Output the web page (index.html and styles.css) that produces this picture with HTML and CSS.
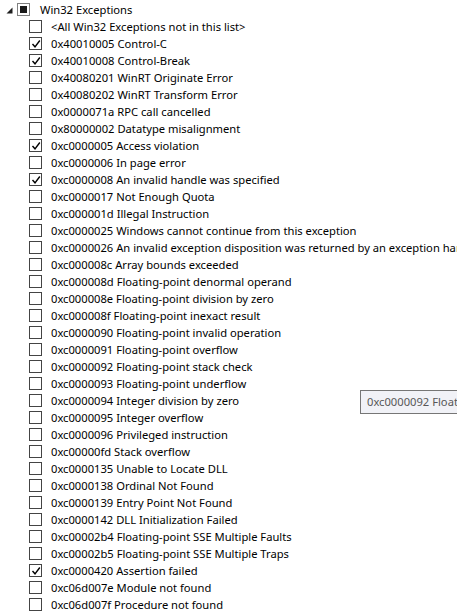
FILE: index.html
```html
<!DOCTYPE html>
<html>
<head>
<meta charset="utf-8">
<link rel="stylesheet" href="styles.css">
</head>
<body>
<div class="tree">
  <div class="row header">
    <svg class="expander" width="7" height="7" viewBox="0 0 7 7"><polygon points="6.5,0.5 6.5,6.5 0.5,6.5" fill="#1e1e1e"/></svg>
    <span class="box partial"><span class="fill"></span></span>
    <span class="label">Win32 Exceptions</span>
  </div>
  <div class="row item"><span class="box"></span><span class="label">&lt;All Win32 Exceptions not in this list&gt;</span></div>
  <div class="row item"><span class="box checked"><svg width="10" height="10" viewBox="0 0 10 10"><polyline points="1.5,5 4,7.8 8.8,1.5" fill="none" stroke="#000" stroke-width="1.4"/></svg></span><span class="label">0x40010005 Control-C</span></div>
  <div class="row item"><span class="box checked"><svg width="10" height="10" viewBox="0 0 10 10"><polyline points="1.5,5 4,7.8 8.8,1.5" fill="none" stroke="#000" stroke-width="1.4"/></svg></span><span class="label">0x40010008 Control-Break</span></div>
  <div class="row item"><span class="box"></span><span class="label">0x40080201 WinRT Originate Error</span></div>
  <div class="row item"><span class="box"></span><span class="label">0x40080202 WinRT Transform Error</span></div>
  <div class="row item"><span class="box"></span><span class="label">0x0000071a RPC call cancelled</span></div>
  <div class="row item"><span class="box"></span><span class="label">0x80000002 Datatype misalignment</span></div>
  <div class="row item"><span class="box checked"><svg width="10" height="10" viewBox="0 0 10 10"><polyline points="1.5,5 4,7.8 8.8,1.5" fill="none" stroke="#000" stroke-width="1.4"/></svg></span><span class="label">0xc0000005 Access violation</span></div>
  <div class="row item"><span class="box"></span><span class="label">0xc0000006 In page error</span></div>
  <div class="row item"><span class="box checked"><svg width="10" height="10" viewBox="0 0 10 10"><polyline points="1.5,5 4,7.8 8.8,1.5" fill="none" stroke="#000" stroke-width="1.4"/></svg></span><span class="label">0xc0000008 An invalid handle was specified</span></div>
  <div class="row item"><span class="box"></span><span class="label">0xc0000017 Not Enough Quota</span></div>
  <div class="row item"><span class="box"></span><span class="label">0xc000001d Illegal Instruction</span></div>
  <div class="row item"><span class="box"></span><span class="label">0xc0000025 Windows cannot continue from this exception</span></div>
  <div class="row item"><span class="box"></span><span class="label">0xc0000026 An invalid exception disposition was returned by an exception handler</span></div>
  <div class="row item"><span class="box"></span><span class="label">0xc000008c Array bounds exceeded</span></div>
  <div class="row item"><span class="box"></span><span class="label">0xc000008d Floating-point denormal operand</span></div>
  <div class="row item"><span class="box"></span><span class="label">0xc000008e Floating-point division by zero</span></div>
  <div class="row item"><span class="box"></span><span class="label">0xc000008f Floating-point inexact result</span></div>
  <div class="row item"><span class="box"></span><span class="label">0xc0000090 Floating-point invalid operation</span></div>
  <div class="row item"><span class="box"></span><span class="label">0xc0000091 Floating-point overflow</span></div>
  <div class="row item"><span class="box"></span><span class="label">0xc0000092 Floating-point stack check</span></div>
  <div class="row item"><span class="box"></span><span class="label">0xc0000093 Floating-point underflow</span></div>
  <div class="row item"><span class="box"></span><span class="label">0xc0000094 Integer division by zero</span></div>
  <div class="row item"><span class="box"></span><span class="label">0xc0000095 Integer overflow</span></div>
  <div class="row item"><span class="box"></span><span class="label">0xc0000096 Privileged instruction</span></div>
  <div class="row item"><span class="box"></span><span class="label">0xc00000fd Stack overflow</span></div>
  <div class="row item"><span class="box"></span><span class="label">0xc0000135 Unable to Locate DLL</span></div>
  <div class="row item"><span class="box"></span><span class="label">0xc0000138 Ordinal Not Found</span></div>
  <div class="row item"><span class="box"></span><span class="label">0xc0000139 Entry Point Not Found</span></div>
  <div class="row item"><span class="box"></span><span class="label">0xc0000142 DLL Initialization Failed</span></div>
  <div class="row item"><span class="box"></span><span class="label">0xc00002b4 Floating-point SSE Multiple Faults</span></div>
  <div class="row item"><span class="box"></span><span class="label">0xc00002b5 Floating-point SSE Multiple Traps</span></div>
  <div class="row item"><span class="box checked"><svg width="10" height="10" viewBox="0 0 10 10"><polyline points="1.5,5 4,7.8 8.8,1.5" fill="none" stroke="#000" stroke-width="1.4"/></svg></span><span class="label">0xc0000420 Assertion failed</span></div>
  <div class="row item"><span class="box"></span><span class="label">0xc06d007e Module not found</span></div>
  <div class="row item"><span class="box"></span><span class="label">0xc06d007f Procedure not found</span></div>
</div>
<div class="tooltip">0xc0000092 Floating-point stack check</div>
</body>
</html>
```
FILE: styles.css
```css
html, body {
  margin: 0;
  padding: 0;
  background: #ffffff;
  width: 457px;
  height: 613px;
  overflow: hidden;
  position: relative;
}
body {
  font-family: "Noto Sans", "Open Sans", sans-serif;
  font-size: 11.2px;
  color: #000;
}
.tree {
  padding-top: 1px;
  display: flex;
  flex-direction: column;
}
.row {
  height: 17px;
  display: flex;
  align-items: center;
  white-space: nowrap;
}
.header {
  padding-left: 6px;
}
.expander {
  margin-right: 4px;
  margin-top: 1px;
}
.item {
  padding-left: 29px;
}
.box {
  box-sizing: border-box;
  width: 13px;
  height: 13px;
  border: 1px solid #444444;
  background: #fff;
  display: flex;
  align-items: center;
  justify-content: center;
  flex: none;
}
.box.partial {
  border-color: #808080;
}
.box.partial .fill {
  width: 7px;
  height: 7px;
  background: #1a1a1a;
}
.label {
  margin-left: 9px;
  line-height: 17px;
}
.header .label {
  margin-left: 10px;
}
.tooltip {
  position: absolute;
  left: 360px;
  top: 390px;
  height: 24px;
  box-sizing: border-box;
  padding: 0 6px;
  line-height: 22px;
  border: 1px solid #767676;
  background: #f1f2f7;
  color: #575757;
  white-space: nowrap;
}
```
